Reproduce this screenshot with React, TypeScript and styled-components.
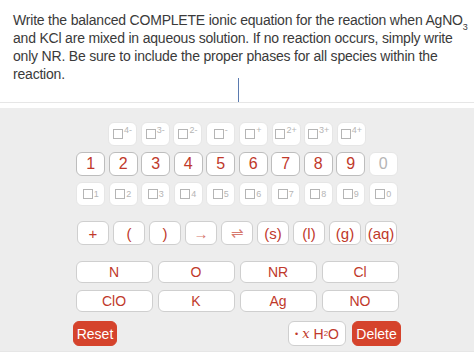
import styled, { createGlobalStyle, css } from 'styled-components'

const GlobalStyle = createGlobalStyle`
  body {
    margin: 0;
    background: #fff;
    font-family: "Liberation Sans", Arial, sans-serif;
  }
`

const Page = styled.div`
  width: 474px;
  height: 359px;
  overflow: hidden;
  display: flex;
  flex-direction: column;
`

const Question = styled.p`
  margin: 0;
  padding: 11px 0 0 13px;
  font-size: 14px;
  letter-spacing: -0.2px;
  line-height: 18px;
  color: #3a3a3a;
  white-space: nowrap;
`

const Answer = styled.div`
  height: 24px;
  margin-top: -5px;
  border-bottom: 1px solid #e6e6e6;
  display: flex;
  justify-content: center;
  padding-left: 2px;
`

const Cursor = styled.div`
  width: 1px;
  height: 24px;
  background: #5b7bb0;
`

const Panel = styled.div`
  margin-top: 5px;
  background: #ededed;
  padding: 14px 0 5px;
  display: flex;
  flex-direction: column;
  align-items: center;
`

const KeyRow = styled.div<{ $gap: number; $mt?: number }>`
  display: flex;
  gap: ${p => p.$gap}px;
  margin-top: ${p => p.$mt ?? 0}px;
`

const Key = styled.div<{ $w: number; $h: number; $variant?: 'off' | 'on' | 'red' }>`
  width: ${p => p.$w}px;
  height: ${p => p.$h}px;
  box-sizing: border-box;
  border-radius: 6px;
  background: #fff;
  display: flex;
  align-items: center;
  justify-content: center;
  color: #c0392b;
  font-size: 14px;
  border: 1px solid #cfcfcf;
  ${p => p.$variant === 'off' && css`
    border-color: #e6e6e6;
    color: #b5b5b5;
  `}
  ${p => p.$variant === 'on' && css`
    border-color: #bdbdbd;
    font-size: 16px;
  `}
  ${p => p.$variant === 'red' && css`
    background: #d5432c;
    border-color: #d5432c;
    color: #fff;
  `}
`

const Box = styled.span`
  display: inline-block;
  width: 8px;
  height: 8px;
  border: 1px solid #b5b5b5;
  margin-right: 1px;
`

const Sup = styled.span`
  font-size: 9px;
  line-height: 1;
  align-self: flex-start;
  margin-top: -3px;
`

const Sub = styled.sub`
  font-size: 9px;
  line-height: 0;
  vertical-align: -5px;
`

const Group = styled.div`
  display: flex;
  align-items: center;
`

const Grid = styled.div`
  margin-top: 16px;
  display: grid;
  grid-template-columns: repeat(4, 77px);
  column-gap: 5px;
  row-gap: 7px;
`

const BottomBar = styled.div`
  margin-top: 9px;
  width: 328px;
  display: flex;
  align-items: center;
  gap: 6px;
`

const Spacer = styled.div`
  flex: 1;
`

const Italic = styled.span`
  font-family: "DejaVu Serif", "Liberation Serif", serif;
  font-style: italic;
  font-size: 13px;
  margin: 0 4px 0 4px;
`

const Dot = styled.span`
  font-size: 9px;
`

const Faint = styled.span`
  color: #d77a6f;
`

const Footer = styled.div`
  flex: 1;
  border-top: 1px solid #e6e6e6;
`

const charges = ['4-', '3-', '2-', '-', '+', '2+', '3+', '4+']
const digits = ['1', '2', '3', '4', '5', '6', '7', '8', '9']
const subs = ['1', '2', '3', '4', '5', '6', '7', '8', '9', '0']
const symbols = ['+', '(', ')', '→', '⇌', '(s)', '(l)', '(g)', '(aq)']
const elements = ['N', 'O', 'NR', 'Cl', 'ClO', 'K', 'Ag', 'NO']

export default function App() {
  return (
    <Page>
      <GlobalStyle />
      <Question>
        Write the balanced COMPLETE ionic equation for the reaction when AgNO<Sub>3</Sub>
        <br />
        and KCl are mixed in aqueous solution. If no reaction occurs, simply write
        <br />
        only NR. Be sure to include the proper phases for all species within the
        <br />
        reaction.
      </Question>
      <Answer>
        <Cursor />
      </Answer>
      <Panel>
        <KeyRow $gap={3.7}>
          {charges.map(c => (
            <Key key={c} $w={29} $h={24} $variant="off">
              <Group>
                <Box />
                <Sup>{c}</Sup>
              </Group>
            </Key>
          ))}
        </KeyRow>
        <KeyRow $gap={3.5} $mt={6}>
          {digits.map(d => (
            <Key key={d} $w={29} $h={24} $variant="on">{d}</Key>
          ))}
          <Key $w={29} $h={24} $variant="off" style={{ fontSize: 16 }}>0</Key>
        </KeyRow>
        <KeyRow $gap={3.5} $mt={6}>
          {subs.map(s => (
            <Key key={s} $w={29} $h={24} $variant="off">
              <Group>
                <Box />
                <Sub>{s}</Sub>
              </Group>
            </Key>
          ))}
        </KeyRow>
        <KeyRow $gap={4} $mt={15}>
          {symbols.map(s => (
            <Key key={s} $w={32} $h={24} style={{ fontSize: 15 }}>
              {s === '→' || s === '⇌' ? <Faint>{s}</Faint> : s}
            </Key>
          ))}
        </KeyRow>
        <Grid>
          {elements.map(e => (
            <Key key={e} $w={77} $h={22}>{e}</Key>
          ))}
        </Grid>
        <BottomBar>
          <Key $w={44} $h={25} $variant="red">Reset</Key>
          <Spacer />
          <Key $w={58} $h={25}>
            <Dot>•</Dot>
            <Italic>x</Italic>
            H<Sub style={{ fontSize: 8, verticalAlign: -4 }}>2</Sub>O
          </Key>
          <Key $w={49} $h={25} $variant="red">Delete</Key>
        </BottomBar>
      </Panel>
      <Footer />
    </Page>
  )
}
